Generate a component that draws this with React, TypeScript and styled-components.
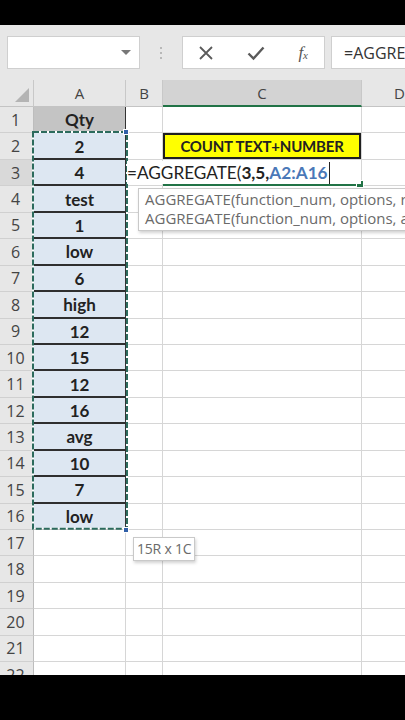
import React from 'react';
import styled, { createGlobalStyle } from 'styled-components';

const ROW_H = 26.45;
const COLS = [34, 92, 37, 199, 76];
const GRID = '#d6d6d6';
const GREEN = '#217346';

const GlobalStyle = createGlobalStyle`
	html, body {
		margin: 0;
		padding: 0;
		background: #000;
	}
	* {
		box-sizing: border-box;
	}
`;

const Screen = styled.div`
	width: 405px;
	height: 720px;
	background: #000;
	display: flex;
	flex-direction: column;
	overflow: hidden;
`;

const TopBand = styled.div`
	height: 25px;
	flex: none;
`;

const BottomBand = styled.div`
	flex: 1;
`;

const Toolbar = styled.div`
	height: 55px;
	flex: none;
	background: #e7e7e7;
	display: flex;
	align-items: center;
	padding-left: 7px;
	overflow: hidden;
	white-space: nowrap;

	& > * {
		flex: none;
	}
`;

const NameBox = styled.div`
	width: 133px;
	height: 33px;
	background: #fff;
	border: 1px solid #cfcfcf;
	display: flex;
	align-items: center;
	justify-content: flex-end;
	padding-right: 8px;
`;

const Caret = styled.div`
	width: 0;
	height: 0;
	border-left: 5px solid transparent;
	border-right: 5px solid transparent;
	border-top: 5px solid #777;
`;

const Grip = styled.div`
	width: 42px;
	display: flex;
	flex-direction: column;
	align-items: center;
	gap: 3px;

	span {
		width: 2px;
		height: 2px;
		background: #a9a9a9;
		border-radius: 1px;
	}
`;

const ButtonsBox = styled.div`
	width: 143px;
	height: 33px;
	background: #fff;
	border: 1px solid #cfcfcf;
	display: flex;
	align-items: center;
	justify-content: space-between;
	padding: 0 16px 0 15px;
	color: #555;
`;

const FxLabel = styled.span`
	font-family: 'Liberation Serif', serif;
	font-style: italic;
	font-size: 17px;
	color: #555;

	sub {
		font-size: 11px;
		vertical-align: -1px;
	}
`;

const FormulaInput = styled.div`
	margin-left: 6px;
	width: 200px;
	height: 33px;
	background: #fff;
	border: 1px solid #cfcfcf;
	border-right: none;
	display: flex;
	align-items: center;
	padding-left: 12px;
	font-family: 'Open Sans', sans-serif;
	font-size: 16px;
	color: #333;
`;

const SheetWrap = styled.div`
	position: relative;
	height: 595px;
	flex: none;
	background: #fff;
	overflow: hidden;
`;

const Sheet = styled.div`
	display: grid;
	grid-template-columns: ${COLS.map((c) => `${c}px`).join(' ')};
	grid-template-rows: 27px repeat(22, ${ROW_H}px);
`;

const ColHead = styled.div<{ $active?: boolean }>`
	background: ${({ $active }) => ($active ? '#d3d3d3' : '#e7e7e7')};
	border-right: 1px solid #c8c8c8;
	border-bottom: ${({ $active }) => ($active ? `2px solid ${GREEN}` : '1px solid #c4c4c4')};
	display: flex;
	align-items: center;
	justify-content: center;
	font-family: 'Open Sans', sans-serif;
	font-size: 15px;
	color: #444;
	position: relative;
`;

const Corner = styled(ColHead)`
	&::after {
		content: '';
		position: absolute;
		right: 4px;
		bottom: 4px;
		width: 0;
		height: 0;
		border-left: 14px solid transparent;
		border-bottom: 14px solid #b4b4b4;
	}
`;

const RowHead = styled.div<{ $active?: boolean }>`
	background: ${({ $active }) => ($active ? '#d9d9d9' : '#e7e7e7')};
	border-right: 1px solid #bdbdbd;
	border-bottom: 1px solid #d0d0d0;
	display: flex;
	align-items: center;
	justify-content: center;
	padding-right: 2px;
	font-family: 'Open Sans', sans-serif;
	font-size: 16px;
	color: #444;
`;

const Cell = styled.div`
	border-right: 1px solid ${GRID};
	border-bottom: 1px solid ${GRID};
	background: #fff;
`;

const DataCell = styled.div<{ $head?: boolean }>`
	background: ${({ $head }) => ($head ? '#c4c4c4' : '#dde7f2')};
	border-right: 1px solid #333;
	border-bottom: 2px solid #2f2f2f;
	display: flex;
	align-items: center;
	justify-content: center;
	font-family: Lato, 'Open Sans', sans-serif;
	font-weight: 700;
	font-size: 17px;
	color: #222;
	padding-top: 1px;
`;

const TitleCell = styled.div`
	border-right: 1px solid ${GRID};
	border-bottom: 1px solid ${GRID};
	display: flex;
`;

const TitleBox = styled.div`
	flex: 1;
	background: #ffff00;
	border: 2px solid #1f1f1f;
	display: flex;
	align-items: center;
	justify-content: center;
	font-family: Lato, sans-serif;
	font-weight: 700;
	font-size: 15px;
	color: #222;
	letter-spacing: -0.2px;
`;

const ActiveCell = styled(Cell)`
	border-bottom: 2px solid ${GREEN};
	position: relative;

	&::after {
		content: '';
		position: absolute;
		right: -3px;
		bottom: -4px;
		width: 6px;
		height: 6px;
		background: ${GREEN};
		border: 1px solid #fff;
	}
`;

const EditBox = styled.div`
	position: absolute;
	left: 127px;
	top: ${27 + ROW_H * 2 + 1}px;
	height: ${ROW_H - 3}px;
	width: 234px;
	background: #fff;
	display: flex;
	align-items: center;
	font-family: Lato, sans-serif;
	font-size: 17.2px;
	color: #222;
	white-space: nowrap;
`;

const Arg = styled.span<{ $ref?: boolean }>`
	font-weight: 700;
	color: ${({ $ref }) => ($ref ? '#4a78b8' : '#222')};
`;

const Cursor = styled.span`
	display: inline-block;
	width: 1.5px;
	height: 22px;
	background: #222;
	margin-left: 1px;
`;

const Tip = styled.div`
	position: absolute;
	background: #fff;
	border: 1px solid #c9c9c9;
	box-shadow: 1px 2px 3px rgba(0, 0, 0, 0.18);
	font-family: 'Open Sans', sans-serif;
	color: #6a6a6a;
	white-space: nowrap;
	overflow: hidden;
`;

const SyntaxTip = styled(Tip)`
	left: 138px;
	top: 108px;
	width: 290px;
	height: 43px;
	padding: 1px 0 0 6px;
	font-size: 15px;
	line-height: 18.5px;
`;

const SizeTip = styled(Tip)`
	left: 133px;
	top: 457px;
	padding: 2px 3px;
	font-size: 14px;
	line-height: 18px;
	letter-spacing: -0.2px;
`;

const Ants = styled.svg`
	position: absolute;
	left: 32px;
	top: ${27 + ROW_H - 2}px;
	overflow: visible;
`;

const Handle = styled.div<{ $top: number }>`
	position: absolute;
	left: 123px;
	top: ${({ $top }) => $top}px;
	width: 6px;
	height: 6px;
	background: #2f5fa8;
	border: 1px solid #fff;
`;

const values = ['Qty', '2', '4', 'test', '1', 'low', '6', 'high', '12', '15', '12', '16', 'avg', '10', '7', 'low'];

function XIcon() {
	return (
		<svg width="16" height="16" viewBox="0 0 16 16">
			<path d="M2 2 L14 14 M14 2 L2 14" stroke="#5a5a5a" strokeWidth="1.8" fill="none" />
		</svg>
	);
}

function CheckIcon() {
	return (
		<svg width="18" height="16" viewBox="0 0 18 16">
			<path d="M1.5 8.5 L6.5 13.5 L16.5 2.5" stroke="#5a5a5a" strokeWidth="2.4" fill="none" />
		</svg>
	);
}

export default function App() {
	const antsH = ROW_H * 15 + 2;
	return (
		<Screen>
			<GlobalStyle />
			<TopBand />
			<Toolbar>
				<NameBox>
					<Caret />
				</NameBox>
				<Grip>
					<span />
					<span />
					<span />
				</Grip>
				<ButtonsBox>
					<XIcon />
					<CheckIcon />
					<FxLabel>
						f<sub>x</sub>
					</FxLabel>
				</ButtonsBox>
				<FormulaInput>=AGGREGATE(3,5,A2:A16</FormulaInput>
			</Toolbar>
			<SheetWrap>
				<Sheet>
					<Corner />
					<ColHead>A</ColHead>
					<ColHead>B</ColHead>
					<ColHead $active>C</ColHead>
					<ColHead>D</ColHead>
					{Array.from({ length: 22 }, (_, i) => {
						const r = i + 1;
						return (
							<React.Fragment key={r}>
								<RowHead $active={r === 3}>{r}</RowHead>
								{r <= 16 ? <DataCell $head={r === 1}>{values[i]}</DataCell> : <Cell />}
								<Cell />
								{r === 2 ? (
									<TitleCell>
										<TitleBox>COUNT TEXT+NUMBER</TitleBox>
									</TitleCell>
								) : r === 3 ? (
									<ActiveCell />
								) : (
									<Cell />
								)}
								<Cell />
							</React.Fragment>
						);
					})}
				</Sheet>

				<Ants width="96" height={antsH}>
					<rect x="1" y="1" width="94" height={antsH - 2} fill="none" stroke="#fff" strokeWidth="2" />
					<rect
						x="1"
						y="1"
						width="94"
						height={antsH - 2}
						fill="none"
						stroke="#2c6b5d"
						strokeWidth="2"
						strokeDasharray="6 2"
					/>
				</Ants>
				<Handle $top={27 + ROW_H - 4} />
				<Handle $top={27 + ROW_H * 16 - 3} />

				<EditBox>
					=AGGREGATE(<Arg>3,5,</Arg>
					<Arg $ref>A2:A16</Arg>
					<Cursor />
				</EditBox>

				<SyntaxTip>
					<div>AGGREGATE(function_num, options, ref1, ...)</div>
					<div>AGGREGATE(function_num, options, array, [k])</div>
				</SyntaxTip>

				<SizeTip>15R x 1C</SizeTip>
			</SheetWrap>
			<BottomBand />
		</Screen>
	);
}
